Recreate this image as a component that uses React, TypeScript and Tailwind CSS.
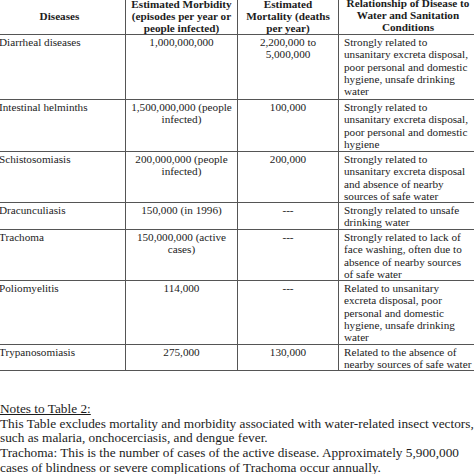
import React from "react";

type Row = {
  disease: string;
  morbidity: string[];
  mortality: string[];
  relation: string[];
  h: string;
};

const rows: Row[] = [
  {
    disease: "Diarrheal diseases",
    morbidity: ["1,000,000,000"],
    mortality: ["2,200,000 to", "5,000,000"],
    relation: [
      "Strongly related to",
      "unsanitary excreta disposal,",
      "poor personal and domestic",
      "hygiene, unsafe drinking",
      "water",
    ],
    h: "h-[65px]",
  },
  {
    disease: "Intestinal helminths",
    morbidity: ["1,500,000,000 (people", "infected)"],
    mortality: ["100,000"],
    relation: [
      "Strongly related to",
      "unsanitary excreta disposal,",
      "poor personal and domestic",
      "hygiene",
    ],
    h: "h-[52px]",
  },
  {
    disease: "Schistosomiasis",
    morbidity: ["200,000,000 (people", "infected)"],
    mortality: ["200,000"],
    relation: [
      "Strongly related to",
      "unsanitary excreta disposal",
      "and absence of nearby",
      "sources of safe water",
    ],
    h: "h-[51px]",
  },
  {
    disease: "Dracunculiasis",
    morbidity: ["150,000 (in 1996)"],
    mortality: ["---"],
    relation: ["Strongly related to unsafe", "drinking water"],
    h: "h-[27px]",
  },
  {
    disease: "Trachoma",
    morbidity: ["150,000,000 (active", "cases)"],
    mortality: ["---"],
    relation: [
      "Strongly related to lack of",
      "face washing, often due to",
      "absence of nearby sources",
      "of safe water",
    ],
    h: "h-[51px]",
  },
  {
    disease: "Poliomyelitis",
    morbidity: ["114,000"],
    mortality: ["---"],
    relation: [
      "Related to unsanitary",
      "excreta disposal, poor",
      "personal and domestic",
      "hygiene, unsafe drinking",
      "water",
    ],
    h: "h-[64px]",
  },
  {
    disease: "Trypanosomiasis",
    morbidity: ["275,000"],
    mortality: ["130,000"],
    relation: ["Related to the absence of", "nearby sources of safe water"],
    h: "h-[26px]",
  },
];

const Lines = ({ lines }: { lines: string[] }) => (
  <>
    {lines.map((l, i) => (
      <div key={i} className="whitespace-nowrap">
        {l}
      </div>
    ))}
  </>
);

const grid = "grid grid-cols-[132px_112px_101px_138px] border-b border-[#555]";
const cell = "border-r border-[#555] px-[5px] pt-[1px]";

export default function App() {
  return (
    <div className="w-[474px] h-[474px] overflow-hidden bg-white text-[#1c1c1c] font-['Liberation_Serif','Times_New_Roman',serif]">
      <div className="w-[483px] -ml-[6px] text-[11.2px] leading-[12.3px]">
        <div className={`${grid} h-[37px] -mt-[2px] font-bold leading-[11.8px] text-center`}>
          <div className={`${cell} flex items-center justify-center pt-[1px]`}>Diseases</div>
          <div className={`${cell} pt-0`}>
            <Lines lines={["Estimated Morbidity", "(episodes per year or", "people infected)"]} />
          </div>
          <div className={`${cell} pt-0`}>
            <Lines lines={["Estimated", "Mortality (deaths", "per year)"]} />
          </div>
          <div className="px-[5px]">
            <Lines lines={["Relationship of Disease to", "Water and Sanitation", "Conditions"]} />
          </div>
        </div>
        {rows.map((r) => (
          <div key={r.disease} className={`${grid} ${r.h}`}>
            <div className={cell}>{r.disease}</div>
            <div className={`${cell} text-center`}>
              <Lines lines={r.morbidity} />
            </div>
            <div className={`${cell} text-center`}>
              <Lines lines={r.mortality} />
            </div>
            <div className="px-[5px] pt-[1px]">
              <Lines lines={r.relation} />
            </div>
          </div>
        ))}
      </div>

      <div className="mt-[31px] text-[13.3px] leading-[14.7px]">
        <div className="underline">Notes to Table 2:</div>
        <Lines
          lines={[
            "This Table excludes mortality and morbidity associated with water-related insect vectors,",
            "such as malaria, onchocerciasis, and dengue fever.",
            "Trachoma: This is the number of cases of the active disease. Approximately 5,900,000",
            "cases of blindness or severe complications of Trachoma occur annually.",
          ]}
        />
      </div>
    </div>
  );
}
